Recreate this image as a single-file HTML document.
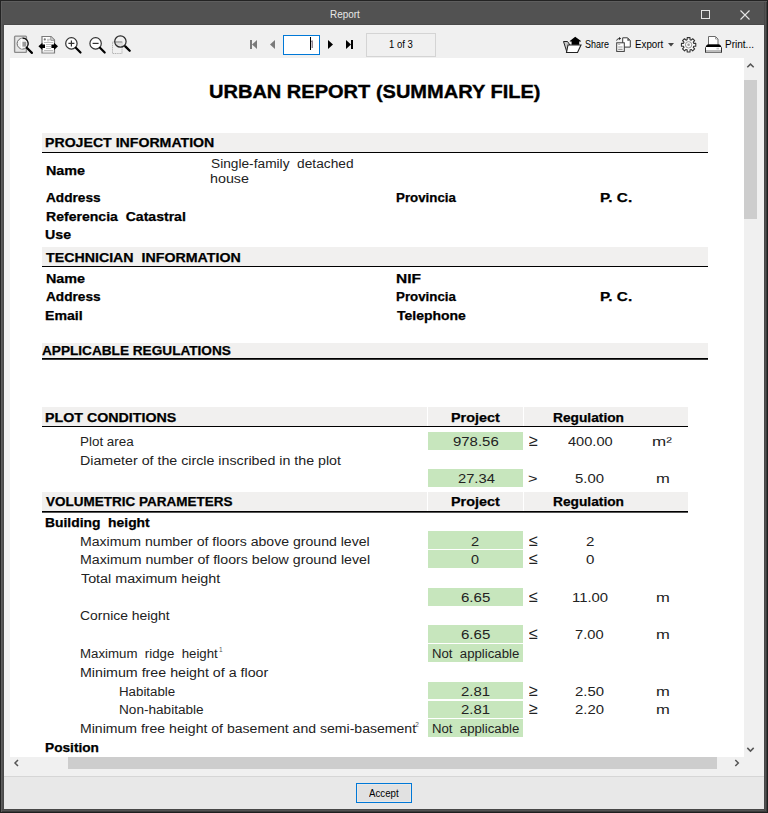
<!DOCTYPE html>
<html><head><meta charset="utf-8"><title>Report</title>
<style>html,body{margin:0;padding:0;width:768px;height:813px;overflow:hidden;background:#232323}body{position:relative;font-family:"Liberation Sans",sans-serif}</style></head><body>
<div style="position:absolute;left:0px;top:0px;width:768px;height:813px;background:#232323;"></div>
<div style="position:absolute;left:1px;top:1px;width:766px;height:811px;background:#5e5e5e;"></div>
<div style="position:absolute;left:2px;top:2px;width:765px;height:810px;background:#3c3c3c;"></div>
<div style="position:absolute;left:2px;top:2px;width:764px;height:809px;background:#525252;"></div>
<div style="position:absolute;left:3px;top:24px;width:761px;height:785px;background:#4a4a4a;"></div>
<div style="position:absolute;left:764px;top:2px;width:1px;height:809px;background:#474747;"></div>
<div style="position:absolute;left:2px;top:809px;width:763px;height:1px;background:#474747;"></div>
<div style="position:absolute;left:766px;top:2px;width:1px;height:810px;background:#3c3c3c;"></div>
<div style="position:absolute;left:2px;top:811px;width:765px;height:1px;background:#3c3c3c;"></div>
<div style="position:absolute;left:767px;top:0px;width:1px;height:813px;background:#1f1f1f;"></div>
<div style="position:absolute;left:0px;top:812px;width:768px;height:1px;background:#1f1f1f;"></div>
<div style="position:absolute;left:4px;top:25px;width:760px;height:752px;background:#f0f0f0;"></div>
<div style="position:absolute;left:4px;top:25px;width:760px;height:1px;background:#f2f2f2;"></div>
<div style="position:absolute;left:4px;top:25px;width:1px;height:752px;background:#f2f2f2;"></div>
<div style="position:absolute;left:763px;top:25px;width:1px;height:752px;background:#f1f1f1;"></div>
<div style="position:absolute;left:4px;top:776px;width:760px;height:1px;background:#d6d6d6;"></div>
<div style="position:absolute;left:4px;top:777px;width:760px;height:32px;background:#e8e8e8;"></div>
<div style="position:absolute;left:10px;top:58px;width:734px;height:699px;background:#ffffff;"></div>
<div style="position:absolute;left:744px;top:80px;width:13px;height:139px;background:#cdcdcd;"></div>
<div style="position:absolute;left:68px;top:757px;width:649px;height:12px;background:#cdcdcd;"></div>
<div style="position:absolute;left:42px;top:133px;width:666px;height:19px;background:#f1f0ef;"></div>
<div style="position:absolute;left:42px;top:152px;width:666px;height:1px;background:#000;"></div>
<div style="position:absolute;left:42px;top:247px;width:666px;height:19px;background:#f1f0ef;"></div>
<div style="position:absolute;left:42px;top:266px;width:666px;height:1px;background:#000;"></div>
<div style="position:absolute;left:42px;top:343px;width:666px;height:15px;background:#f1f0ef;"></div>
<div style="position:absolute;left:42px;top:358px;width:666px;height:1px;background:#000;"></div>
<div style="position:absolute;left:42px;top:359px;width:666px;height:1px;background:#3a3a3a;"></div>
<div style="position:absolute;left:42px;top:407px;width:646px;height:19px;background:#f1f0ef;"></div>
<div style="position:absolute;left:427px;top:407px;width:1px;height:19px;background:#fff;"></div>
<div style="position:absolute;left:523px;top:407px;width:1px;height:19px;background:#fff;"></div>
<div style="position:absolute;left:42px;top:426px;width:646px;height:1px;background:#000;"></div>
<div style="position:absolute;left:42px;top:492px;width:646px;height:19px;background:#f1f0ef;"></div>
<div style="position:absolute;left:427px;top:492px;width:1px;height:19px;background:#fff;"></div>
<div style="position:absolute;left:523px;top:492px;width:1px;height:19px;background:#fff;"></div>
<div style="position:absolute;left:42px;top:511px;width:646px;height:1px;background:#000;"></div>
<div style="position:absolute;left:42px;top:512px;width:646px;height:1px;background:#555;"></div>
<div style="position:absolute;left:428px;top:432px;width:95px;height:18px;background:#c7e6bd;"></div>
<div style="position:absolute;left:428px;top:469px;width:95px;height:18px;background:#c7e6bd;"></div>
<div style="position:absolute;left:428px;top:531px;width:95px;height:18px;background:#c7e6bd;"></div>
<div style="position:absolute;left:428px;top:550px;width:95px;height:18px;background:#c7e6bd;"></div>
<div style="position:absolute;left:428px;top:588px;width:95px;height:18px;background:#c7e6bd;"></div>
<div style="position:absolute;left:428px;top:625px;width:95px;height:18px;background:#c7e6bd;"></div>
<div style="position:absolute;left:428px;top:644px;width:95px;height:18px;background:#c7e6bd;"></div>
<div style="position:absolute;left:428px;top:682px;width:95px;height:17px;background:#c7e6bd;"></div>
<div style="position:absolute;left:428px;top:701px;width:95px;height:17px;background:#c7e6bd;"></div>
<div style="position:absolute;left:428px;top:719px;width:95px;height:18px;background:#c7e6bd;"></div>
<svg style="position:absolute;left:0;top:0" width="768" height="813">
<rect x="701.5" y="10.5" width="8" height="8" fill="none" stroke="#e6e6e6" stroke-width="1"/><rect x="701" y="10" width="9" height="1" fill="#e6e6e6"/><path d="M740.5 10.5 L749.5 19.5 M749.5 10.5 L740.5 19.5" stroke="#e6e6e6" stroke-width="1.1"/><rect x="14.6" y="36.1" width="11.8" height="16.3" rx="0.8" fill="#e6e6e6" stroke="#8c8c8c" stroke-width="1.4"/><circle cx="22.6" cy="43.6" r="5.5" fill="#f0f0f0" stroke="#6a6a6a" stroke-width="1"/><rect x="21" y="38.6" width="1.4" height="10" fill="#fff"/><rect x="22.4" y="41.8" width="3.8" height="4.8" fill="#9a9a9a"/><path d="M22.6 38.1 A5.5 5.5 0 0 1 26.5 47.5" fill="none" stroke="#111" stroke-width="1.1"/><path d="M26.8 47.8 L31.9 52.9" stroke="#000" stroke-width="2.2" stroke-linecap="round"/><path d="M42 36.5 H51 L54.5 40 V53 H42 Z" fill="#fff" stroke="#7a7a7a" stroke-width="1.2"/><path d="M50.8 36.8 V40.3 H54.2" fill="#ddd" stroke="#888" stroke-width="0.9"/><circle cx="44.8" cy="39.4" r="1.1" fill="#777"/><path d="M47 39.3 H50 M47 40.8 H49.5" stroke="#aaa" stroke-width="0.8"/><path d="M44 42.5 H53 M46 44.5 H51 M46 46.5 H51 M46 48.5 H51 M44 50.5 H53" stroke="#b0b0b0" stroke-width="0.8"/><rect x="43" y="51.3" width="10.5" height="1" fill="#ddd"/><path d="M38.4 46.3 L42.4 42.7 V44.6 H45 V48 H42.4 V49.9 Z" fill="#000"/><path d="M58 46.3 L54 42.7 V44.6 H51.4 V48 H54 V49.9 Z" fill="#000"/><circle cx="71.4" cy="43.4" r="5.7" fill="#fff" stroke="#333" stroke-width="1.2"/><path d="M68.4 43.4 H74.4 M71.4 40.4 V46.4" stroke="#333" stroke-width="1.2"/><path d="M75.8 47.8 L80.5 52.5" stroke="#000" stroke-width="2.2" stroke-linecap="round"/><circle cx="95.6" cy="43.4" r="5.7" fill="#fff" stroke="#333" stroke-width="1.2"/><path d="M92.6 43.4 H98.6" stroke="#333" stroke-width="1.2"/><path d="M100 47.8 L104.7 52.5" stroke="#000" stroke-width="2.2" stroke-linecap="round"/><rect x="112.5" y="42" width="9.5" height="11.5" fill="none" stroke="#b4b4b4" stroke-width="1" stroke-dasharray="1.2 0.6"/><rect x="115" y="41.2" width="7.3" height="1.6" fill="#a8a8a8"/><rect x="115" y="43" width="7" height="2.5" fill="#dcdcdc"/><circle cx="120.4" cy="41.5" r="5.7" fill="none" stroke="#2a2a2a" stroke-width="1.2"/><path d="M125.3 46.4 L129.7 50.8" stroke="#000" stroke-width="2.3" stroke-linecap="round"/><rect x="250" y="40" width="2" height="9" fill="#7a7a7a"/><path d="M257 40 V49 L252 44.5 Z" fill="#7a7a7a"/><path d="M275 40 V49 L270 44.5 Z" fill="#7a7a7a"/><rect x="283.5" y="35.5" width="36" height="19" fill="#fff" stroke="#0078d7" stroke-width="1"/><rect x="310" y="37" width="1" height="13" fill="#000"/><path d="M312.2 40.5 V48 M311.3 41.6 L312.4 40.6" stroke="#6a5a6a" stroke-width="1.1" fill="none"/><path d="M328 40 V49 L333 44.5 Z" fill="#000"/><path d="M346 40 V49 L351 44.5 Z" fill="#000"/><rect x="351" y="40" width="2" height="9" fill="#000"/><rect x="366.5" y="33.5" width="69" height="23" fill="#f0f0f0" stroke="#d4d4d4" stroke-width="1"/><path d="M563.5 41.5 L567.5 41.5 L570 45 L567 52.5 Z" fill="#c8c8c8" stroke="#222" stroke-width="1"/><path d="M568 45 H581 L577.5 52.5 H566.5 Z" fill="#fff" stroke="#222" stroke-width="1.1"/><path d="M575.2 36.8 L581 41 V41.6 H579.2 V44.8 H571.6 V41.6 H569.8 V41 Z" fill="#000"/><path d="M622.7 47.1 V37.8 H627.6 L630.3 40.5 V47.1 Z" fill="#fff" stroke="#3a3a3a" stroke-width="1"/><path d="M627.3 37.8 V40.8 H630.3 Z" fill="#555"/><rect x="616.7" y="42.8" width="7.6" height="8.6" fill="#fff" stroke="#3a3a3a" stroke-width="1"/><path d="M618.2 44.3 H620.2 M618.2 47 H622.6 M618.2 49.4 H622.6" stroke="#9a9a9a" stroke-width="1.1"/><path d="M616.6 40.6 Q617 38.6 619.3 38.5" fill="none" stroke="#333" stroke-width="1"/><path d="M619 36.9 L621.2 38.5 L619 40.1 Z" fill="#222"/><path d="M668 43 H674 L671 46.5 Z" fill="#444"/><g transform="translate(688.6 44.8)"><path d="M4.91 -1.99 L5.09 -1.46 L7.17 -1.39 L7.17 1.39 L5.09 1.46 L4.88 2.07 L4.64 2.57 L6.05 4.08 L4.08 6.05 L2.57 4.64 L1.99 4.91 L1.46 5.09 L1.39 7.17 L-1.39 7.17 L-1.46 5.09 L-2.07 4.88 L-2.57 4.64 L-4.08 6.05 L-6.05 4.08 L-4.64 2.57 L-4.91 1.99 L-5.09 1.46 L-7.17 1.39 L-7.17 -1.39 L-5.09 -1.46 L-4.88 -2.07 L-4.64 -2.57 L-6.05 -4.08 L-4.08 -6.05 L-2.57 -4.64 L-1.99 -4.91 L-1.46 -5.09 L-1.39 -7.17 L1.39 -7.17 L1.46 -5.09 L2.07 -4.88 L2.57 -4.64 L4.08 -6.05 L6.05 -4.08 L4.64 -2.57 Z" fill="#fafafa" stroke="#333" stroke-width="1.1" stroke-linejoin="round"/><circle r="3.2" fill="none" stroke="#8a8a8a" stroke-width="0.9"/><circle r="1.3" fill="#9a9a9a"/></g><path d="M708.5 45 V36.5 H715.5 L718 39 V45" fill="#fff" stroke="#6a6a6a" stroke-width="1"/><path d="M715.5 36.5 V39 H718" fill="none" stroke="#8a8a8a" stroke-width="0.8"/><path d="M705.5 52.5 V47.5 L707.5 45 H719.5 L721.5 47.5 V52.5 Z" fill="#fff" stroke="#333" stroke-width="1"/><path d="M706 46.5 L707.8 45 H719.2 L721 46.5 Z" fill="#000" stroke="#000" stroke-width="1"/><rect x="706" y="50" width="15" height="2.5" fill="#bdbdbd"/><rect x="716.5" y="47.8" width="2.5" height="1.6" fill="#c8c8c8"/><path d="M747.3 67.3 L750.5 64.1 L753.7 67.3" fill="none" stroke="#555" stroke-width="1.5"/><path d="M747.3 747.9 L750.5 751.1 L753.7 747.9" fill="none" stroke="#555" stroke-width="1.5"/><path d="M18 760 L15 763 L18 766" fill="none" stroke="#555" stroke-width="1.5"/><path d="M735.3 760 L738.3 763 L735.3 766" fill="none" stroke="#555" stroke-width="1.5"/><rect x="356.5" y="783.5" width="55" height="19" fill="#e1e1e1" stroke="#0078d7" stroke-width="1"/><rect x="357.5" y="784.5" width="53" height="17" fill="none" stroke="#e8e8e8" stroke-width="1"/></svg>
<div id="title" style="position:absolute;left:209.00px;top:82px;white-space:pre;font:bold 18px/20px 'Liberation Sans',sans-serif;color:#000;letter-spacing:0.000px;transform:scale(1.1125,1);transform-origin:0 16px;-webkit-text-stroke:0.35px #000;">URBAN REPORT (SUMMARY FILE)</div>
<div id="pi" style="position:absolute;left:45.00px;top:133px;white-space:pre;font:bold 12.5px/20px 'Liberation Sans',sans-serif;color:#000;letter-spacing:0.000px;transform:scale(1.1304,1);transform-origin:0 14px;-webkit-text-stroke:0.25px #000;">PROJECT INFORMATION</div>
<div id="pi_name" style="position:absolute;left:45.50px;top:161px;white-space:pre;font:bold 12.5px/20px 'Liberation Sans',sans-serif;color:#000;letter-spacing:0.000px;transform:scale(1.1484,1);transform-origin:0 14px;-webkit-text-stroke:0.25px #000;">Name</div>
<div id="pi_sf" style="position:absolute;left:211.00px;top:154px;white-space:pre;font:normal 12.5px/20px 'Liberation Sans',sans-serif;color:#222;letter-spacing:0.000px;transform:scale(1.0971,1);transform-origin:0 14px;">Single-family  detached</div>
<div id="pi_house" style="position:absolute;left:210.10px;top:169px;white-space:pre;font:normal 12.5px/20px 'Liberation Sans',sans-serif;color:#222;letter-spacing:0.000px;transform:scale(1.1426,1);transform-origin:0 14px;">house</div>
<div id="pi_addr" style="position:absolute;left:46.04px;top:188px;white-space:pre;font:bold 12.5px/20px 'Liberation Sans',sans-serif;color:#000;letter-spacing:0.000px;transform:scale(1.0922,1);transform-origin:0 14px;-webkit-text-stroke:0.25px #000;">Address</div>
<div id="pi_prov" style="position:absolute;left:395.88px;top:188px;white-space:pre;font:bold 12.5px/20px 'Liberation Sans',sans-serif;color:#000;letter-spacing:0.000px;transform:scale(1.0649,1);transform-origin:0 14px;-webkit-text-stroke:0.25px #000;">Provincia</div>
<div id="pi_pc" style="position:absolute;left:599.62px;top:188px;white-space:pre;font:bold 12.5px/20px 'Liberation Sans',sans-serif;color:#000;letter-spacing:0.000px;transform:scale(1.2283,1);transform-origin:0 14px;-webkit-text-stroke:0.25px #000;">P. C.</div>
<div id="pi_ref" style="position:absolute;left:45.50px;top:207px;white-space:pre;font:bold 12.5px/20px 'Liberation Sans',sans-serif;color:#000;letter-spacing:0.000px;transform:scale(1.1244,1);transform-origin:0 14px;-webkit-text-stroke:0.25px #000;">Referencia  Catastral</div>
<div id="pi_use" style="position:absolute;left:45.14px;top:225px;white-space:pre;font:bold 12.5px/20px 'Liberation Sans',sans-serif;color:#000;letter-spacing:0.000px;transform:scale(1.1347,1);transform-origin:0 14px;-webkit-text-stroke:0.25px #000;">Use</div>
<div id="ti" style="position:absolute;left:46.44px;top:248px;white-space:pre;font:bold 12.5px/20px 'Liberation Sans',sans-serif;color:#000;letter-spacing:0.000px;transform:scale(1.1367,1);transform-origin:0 14px;-webkit-text-stroke:0.25px #000;">TECHNICIAN  INFORMATION</div>
<div id="ti_name" style="position:absolute;left:45.50px;top:269px;white-space:pre;font:bold 12.5px/20px 'Liberation Sans',sans-serif;color:#000;letter-spacing:0.000px;transform:scale(1.1484,1);transform-origin:0 14px;-webkit-text-stroke:0.25px #000;">Name</div>
<div id="ti_nif" style="position:absolute;left:395.52px;top:269px;white-space:pre;font:bold 12.5px/20px 'Liberation Sans',sans-serif;color:#000;letter-spacing:0.000px;transform:scale(1.2390,1);transform-origin:0 14px;-webkit-text-stroke:0.25px #000;">NIF</div>
<div id="ti_addr" style="position:absolute;left:46.04px;top:287px;white-space:pre;font:bold 12.5px/20px 'Liberation Sans',sans-serif;color:#000;letter-spacing:0.000px;transform:scale(1.0922,1);transform-origin:0 14px;-webkit-text-stroke:0.25px #000;">Address</div>
<div id="ti_prov" style="position:absolute;left:395.88px;top:287px;white-space:pre;font:bold 12.5px/20px 'Liberation Sans',sans-serif;color:#000;letter-spacing:0.000px;transform:scale(1.0649,1);transform-origin:0 14px;-webkit-text-stroke:0.25px #000;">Provincia</div>
<div id="ti_pc" style="position:absolute;left:599.62px;top:287px;white-space:pre;font:bold 12.5px/20px 'Liberation Sans',sans-serif;color:#000;letter-spacing:0.000px;transform:scale(1.2283,1);transform-origin:0 14px;-webkit-text-stroke:0.25px #000;">P. C.</div>
<div id="ti_email" style="position:absolute;left:45.14px;top:306px;white-space:pre;font:bold 12.5px/20px 'Liberation Sans',sans-serif;color:#000;letter-spacing:0.000px;transform:scale(1.1290,1);transform-origin:0 14px;-webkit-text-stroke:0.25px #000;">Email</div>
<div id="ti_tel" style="position:absolute;left:396.78px;top:306px;white-space:pre;font:bold 12.5px/20px 'Liberation Sans',sans-serif;color:#000;letter-spacing:0.000px;transform:scale(1.1187,1);transform-origin:0 14px;-webkit-text-stroke:0.25px #000;">Telephone</div>
<div id="ar" style="position:absolute;left:42.14px;top:341px;white-space:pre;font:bold 12.5px/20px 'Liberation Sans',sans-serif;color:#000;letter-spacing:0.000px;transform:scale(1.0894,1);transform-origin:0 14px;-webkit-text-stroke:0.25px #000;">APPLICABLE REGULATIONS</div>
<div id="pc" style="position:absolute;left:45.00px;top:408px;white-space:pre;font:bold 12.5px/20px 'Liberation Sans',sans-serif;color:#000;letter-spacing:0.000px;transform:scale(1.1387,1);transform-origin:0 14px;-webkit-text-stroke:0.25px #000;">PLOT CONDITIONS</div>
<div id="pc_proj" style="position:absolute;left:450.62px;top:408px;white-space:pre;font:bold 12.5px/20px 'Liberation Sans',sans-serif;color:#000;letter-spacing:0.000px;transform:scale(1.1489,1);transform-origin:0 14px;-webkit-text-stroke:0.25px #000;">Project</div>
<div id="pc_reg" style="position:absolute;left:552.76px;top:408px;white-space:pre;font:bold 12.5px/20px 'Liberation Sans',sans-serif;color:#000;letter-spacing:0.000px;transform:scale(1.0996,1);transform-origin:0 14px;-webkit-text-stroke:0.25px #000;">Regulation</div>
<div id="pc_area" style="position:absolute;left:80.00px;top:432px;white-space:pre;font:normal 12.5px/20px 'Liberation Sans',sans-serif;color:#222;letter-spacing:0.000px;transform:scale(1.0743,1);transform-origin:0 14px;">Plot area</div>
<div id="pc_area_v" style="position:absolute;left:452.62px;top:432px;white-space:pre;font:normal 12.5px/20px 'Liberation Sans',sans-serif;color:#222;letter-spacing:0.000px;transform:scale(1.1957,1);transform-origin:0 14px;">978.56</div>
<div id="pc_area_op" style="position:absolute;left:528.90px;top:432px;white-space:pre;font:normal 12.5px/20px 'Liberation Sans',sans-serif;color:#222;letter-spacing:0.000px;transform:scale(1.3000,1.3);transform-origin:0 14px;">≥</div>
<div id="pc_area_r" style="position:absolute;left:567.90px;top:432px;white-space:pre;font:normal 12.5px/20px 'Liberation Sans',sans-serif;color:#222;letter-spacing:0.000px;transform:scale(1.1675,1);transform-origin:0 14px;">400.00</div>
<div id="pc_area_u" style="position:absolute;left:652.24px;top:432px;white-space:pre;font:normal 12.5px/20px 'Liberation Sans',sans-serif;color:#222;letter-spacing:0.000px;transform:scale(1.3577,1);transform-origin:0 14px;">m²</div>
<div id="pc_diam" style="position:absolute;left:80.00px;top:451px;white-space:pre;font:normal 12.5px/20px 'Liberation Sans',sans-serif;color:#222;letter-spacing:0.000px;transform:scale(1.1382,1);transform-origin:0 14px;">Diameter of the circle inscribed in the plot</div>
<div id="pc_diam_v" style="position:absolute;left:457.80px;top:469px;white-space:pre;font:normal 12.5px/20px 'Liberation Sans',sans-serif;color:#222;letter-spacing:0.000px;transform:scale(1.1774,1);transform-origin:0 14px;">27.34</div>
<div id="pc_diam_op" style="position:absolute;left:528.00px;top:469px;white-space:pre;font:normal 12.5px/20px 'Liberation Sans',sans-serif;color:#222;letter-spacing:0.000px;transform:scale(1.3000,1);transform-origin:0 14px;">&gt;</div>
<div id="pc_diam_r" style="position:absolute;left:575.00px;top:469px;white-space:pre;font:normal 12.5px/20px 'Liberation Sans',sans-serif;color:#222;letter-spacing:0.000px;transform:scale(1.1909,1);transform-origin:0 14px;">5.00</div>
<div id="pc_diam_u" style="position:absolute;left:656.00px;top:469px;white-space:pre;font:normal 12.5px/20px 'Liberation Sans',sans-serif;color:#222;letter-spacing:0.000px;transform:scale(1.3257,1);transform-origin:0 14px;">m</div>
<div id="vp" style="position:absolute;left:45.90px;top:492px;white-space:pre;font:bold 12.5px/20px 'Liberation Sans',sans-serif;color:#000;letter-spacing:0.000px;transform:scale(1.0804,1);transform-origin:0 14px;-webkit-text-stroke:0.25px #000;">VOLUMETRIC PARAMETERS</div>
<div id="vp_proj" style="position:absolute;left:450.62px;top:492px;white-space:pre;font:bold 12.5px/20px 'Liberation Sans',sans-serif;color:#000;letter-spacing:0.000px;transform:scale(1.1489,1);transform-origin:0 14px;-webkit-text-stroke:0.25px #000;">Project</div>
<div id="vp_reg" style="position:absolute;left:552.76px;top:492px;white-space:pre;font:bold 12.5px/20px 'Liberation Sans',sans-serif;color:#000;letter-spacing:0.000px;transform:scale(1.0996,1);transform-origin:0 14px;-webkit-text-stroke:0.25px #000;">Regulation</div>
<div id="vp_bh" style="position:absolute;left:45.00px;top:513px;white-space:pre;font:bold 12.5px/20px 'Liberation Sans',sans-serif;color:#000;letter-spacing:0.000px;transform:scale(1.1085,1);transform-origin:0 14px;-webkit-text-stroke:0.25px #000;">Building  height</div>
<div id="vp_fa" style="position:absolute;left:79.76px;top:532px;white-space:pre;font:normal 12.5px/20px 'Liberation Sans',sans-serif;color:#222;letter-spacing:0.000px;transform:scale(1.1270,1);transform-origin:0 14px;">Maximum number of floors above ground level</div>
<div id="vp_fb" style="position:absolute;left:79.76px;top:550px;white-space:pre;font:normal 12.5px/20px 'Liberation Sans',sans-serif;color:#222;letter-spacing:0.000px;transform:scale(1.1345,1);transform-origin:0 14px;">Maximum number of floors below ground level</div>
<div id="vp_tmh" style="position:absolute;left:80.66px;top:569px;white-space:pre;font:normal 12.5px/20px 'Liberation Sans',sans-serif;color:#222;letter-spacing:0.000px;transform:scale(1.1451,1);transform-origin:0 14px;">Total maximum height</div>
<div id="vp_ch" style="position:absolute;left:79.76px;top:606px;white-space:pre;font:normal 12.5px/20px 'Liberation Sans',sans-serif;color:#222;letter-spacing:0.000px;transform:scale(1.1129,1);transform-origin:0 14px;">Cornice height</div>
<div id="vp_mrh" style="position:absolute;left:79.76px;top:644px;white-space:pre;font:normal 12.5px/20px 'Liberation Sans',sans-serif;color:#222;letter-spacing:0.000px;transform:scale(1.0606,1);transform-origin:0 14px;">Maximum  ridge  height</div>
<div id="vp_mfh" style="position:absolute;left:79.76px;top:663px;white-space:pre;font:normal 12.5px/20px 'Liberation Sans',sans-serif;color:#222;letter-spacing:0.000px;transform:scale(1.1383,1);transform-origin:0 14px;">Minimum free height of a floor</div>
<div id="vp_hab" style="position:absolute;left:118.50px;top:682px;white-space:pre;font:normal 12.5px/20px 'Liberation Sans',sans-serif;color:#222;letter-spacing:0.000px;transform:scale(1.0642,1);transform-origin:0 14px;">Habitable</div>
<div id="vp_nonhab" style="position:absolute;left:118.50px;top:700px;white-space:pre;font:normal 12.5px/20px 'Liberation Sans',sans-serif;color:#222;letter-spacing:0.000px;transform:scale(1.0879,1);transform-origin:0 14px;">Non-habitable</div>
<div id="vp_base" style="position:absolute;left:79.76px;top:719px;white-space:pre;font:normal 12.5px/20px 'Liberation Sans',sans-serif;color:#222;letter-spacing:0.000px;transform:scale(1.1249,1);transform-origin:0 14px;">Minimum free height of basement and semi-basement</div>
<div id="vp_pos" style="position:absolute;left:45.00px;top:738px;white-space:pre;font:bold 12.5px/20px 'Liberation Sans',sans-serif;color:#000;letter-spacing:0.000px;transform:scale(1.0945,1);transform-origin:0 14px;-webkit-text-stroke:0.25px #000;">Position</div>
<div id="v_fa" style="position:absolute;left:471.12px;top:532px;white-space:pre;font:normal 12.5px/20px 'Liberation Sans',sans-serif;color:#222;letter-spacing:0.000px;transform:scale(1.1737,1);transform-origin:0 14px;">2</div>
<div id="v_fa_op" style="position:absolute;left:528.90px;top:532px;white-space:pre;font:normal 12.5px/20px 'Liberation Sans',sans-serif;color:#222;letter-spacing:0.000px;transform:scale(1.3000,1.3);transform-origin:0 14px;">≤</div>
<div id="v_fa_r" style="position:absolute;left:585.62px;top:532px;white-space:pre;font:normal 12.5px/20px 'Liberation Sans',sans-serif;color:#222;letter-spacing:0.000px;transform:scale(1.2070,1);transform-origin:0 14px;">2</div>
<div id="v_fb" style="position:absolute;left:471.12px;top:550px;white-space:pre;font:normal 12.5px/20px 'Liberation Sans',sans-serif;color:#222;letter-spacing:0.000px;transform:scale(1.1500,1);transform-origin:0 14px;">0</div>
<div id="v_fb_op" style="position:absolute;left:528.90px;top:550px;white-space:pre;font:normal 12.5px/20px 'Liberation Sans',sans-serif;color:#222;letter-spacing:0.000px;transform:scale(1.3000,1.3);transform-origin:0 14px;">≤</div>
<div id="v_fb_r" style="position:absolute;left:585.62px;top:550px;white-space:pre;font:normal 12.5px/20px 'Liberation Sans',sans-serif;color:#222;letter-spacing:0.000px;transform:scale(1.2070,1);transform-origin:0 14px;">0</div>
<div id="v_tmh" style="position:absolute;left:461.12px;top:588px;white-space:pre;font:normal 12.5px/20px 'Liberation Sans',sans-serif;color:#222;letter-spacing:0.000px;transform:scale(1.2047,1);transform-origin:0 14px;">6.65</div>
<div id="v_tmh_op" style="position:absolute;left:528.90px;top:588px;white-space:pre;font:normal 12.5px/20px 'Liberation Sans',sans-serif;color:#222;letter-spacing:0.000px;transform:scale(1.3000,1.3);transform-origin:0 14px;">≤</div>
<div id="v_tmh_r" style="position:absolute;left:571.88px;top:588px;white-space:pre;font:normal 12.5px/20px 'Liberation Sans',sans-serif;color:#222;letter-spacing:0.000px;transform:scale(1.1882,1);transform-origin:0 14px;">11.00</div>
<div id="v_tmh_u" style="position:absolute;left:656.00px;top:588px;white-space:pre;font:normal 12.5px/20px 'Liberation Sans',sans-serif;color:#222;letter-spacing:0.000px;transform:scale(1.3257,1);transform-origin:0 14px;">m</div>
<div id="v_ch" style="position:absolute;left:461.12px;top:625px;white-space:pre;font:normal 12.5px/20px 'Liberation Sans',sans-serif;color:#222;letter-spacing:0.000px;transform:scale(1.2047,1);transform-origin:0 14px;">6.65</div>
<div id="v_ch_op" style="position:absolute;left:528.90px;top:625px;white-space:pre;font:normal 12.5px/20px 'Liberation Sans',sans-serif;color:#222;letter-spacing:0.000px;transform:scale(1.3000,1.3);transform-origin:0 14px;">≤</div>
<div id="v_ch_r" style="position:absolute;left:574.62px;top:625px;white-space:pre;font:normal 12.5px/20px 'Liberation Sans',sans-serif;color:#222;letter-spacing:0.000px;transform:scale(1.1740,1);transform-origin:0 14px;">7.00</div>
<div id="v_ch_u" style="position:absolute;left:656.00px;top:625px;white-space:pre;font:normal 12.5px/20px 'Liberation Sans',sans-serif;color:#222;letter-spacing:0.000px;transform:scale(1.3257,1);transform-origin:0 14px;">m</div>
<div id="v_mrh" style="position:absolute;left:431.76px;top:644px;white-space:pre;font:normal 12.5px/20px 'Liberation Sans',sans-serif;color:#222;letter-spacing:0.000px;transform:scale(1.0550,1);transform-origin:0 14px;">Not  applicable</div>
<div id="v_hab" style="position:absolute;left:461.12px;top:682px;white-space:pre;font:normal 12.5px/20px 'Liberation Sans',sans-serif;color:#222;letter-spacing:0.000px;transform:scale(1.1926,1);transform-origin:0 14px;">2.81</div>
<div id="v_hab_op" style="position:absolute;left:528.90px;top:682px;white-space:pre;font:normal 12.5px/20px 'Liberation Sans',sans-serif;color:#222;letter-spacing:0.000px;transform:scale(1.3000,1.3);transform-origin:0 14px;">≥</div>
<div id="v_hab_r" style="position:absolute;left:575.00px;top:682px;white-space:pre;font:normal 12.5px/20px 'Liberation Sans',sans-serif;color:#222;letter-spacing:0.000px;transform:scale(1.1909,1);transform-origin:0 14px;">2.50</div>
<div id="v_hab_u" style="position:absolute;left:656.00px;top:682px;white-space:pre;font:normal 12.5px/20px 'Liberation Sans',sans-serif;color:#222;letter-spacing:0.000px;transform:scale(1.3257,1);transform-origin:0 14px;">m</div>
<div id="v_nh" style="position:absolute;left:461.12px;top:700px;white-space:pre;font:normal 12.5px/20px 'Liberation Sans',sans-serif;color:#222;letter-spacing:0.000px;transform:scale(1.1926,1);transform-origin:0 14px;">2.81</div>
<div id="v_nh_op" style="position:absolute;left:528.90px;top:700px;white-space:pre;font:normal 12.5px/20px 'Liberation Sans',sans-serif;color:#222;letter-spacing:0.000px;transform:scale(1.3000,1.3);transform-origin:0 14px;">≥</div>
<div id="v_nh_r" style="position:absolute;left:575.00px;top:700px;white-space:pre;font:normal 12.5px/20px 'Liberation Sans',sans-serif;color:#222;letter-spacing:0.000px;transform:scale(1.1909,1);transform-origin:0 14px;">2.20</div>
<div id="v_nh_u" style="position:absolute;left:656.00px;top:700px;white-space:pre;font:normal 12.5px/20px 'Liberation Sans',sans-serif;color:#222;letter-spacing:0.000px;transform:scale(1.3257,1);transform-origin:0 14px;">m</div>
<div id="v_base" style="position:absolute;left:431.76px;top:719px;white-space:pre;font:normal 12.5px/20px 'Liberation Sans',sans-serif;color:#222;letter-spacing:0.000px;transform:scale(1.0550,1);transform-origin:0 14px;">Not  applicable</div>
<div id="t_report" style="position:absolute;left:329.50px;top:4px;white-space:pre;font:normal 10.5px/20px 'Liberation Sans',sans-serif;color:#e8e8e8;letter-spacing:0.000px;transform:scale(0.9419,1);transform-origin:0 14px;">Report</div>
<div id="t_share" style="position:absolute;left:584.50px;top:35px;white-space:pre;font:normal 10px/20px 'Liberation Sans',sans-serif;color:#000;letter-spacing:0.000px;transform:scale(0.8962,1);transform-origin:0 13px;">Share</div>
<div id="t_export" style="position:absolute;left:635.24px;top:35px;white-space:pre;font:normal 10px/20px 'Liberation Sans',sans-serif;color:#000;letter-spacing:0.000px;transform:scale(0.9769,1);transform-origin:0 13px;">Export</div>
<div id="t_print" style="position:absolute;left:725.24px;top:35px;white-space:pre;font:normal 10px/20px 'Liberation Sans',sans-serif;color:#000;letter-spacing:0.000px;transform:scale(1.0030,1);transform-origin:0 13px;">Print...</div>
<div id="t_pages" style="position:absolute;left:388.50px;top:35px;white-space:pre;font:normal 10px/20px 'Liberation Sans',sans-serif;color:#000;letter-spacing:0.000px;transform:scale(0.9507,1);transform-origin:0 13px;">1 of 3</div>
<div id="t_accept" style="position:absolute;left:368.90px;top:783px;white-space:pre;font:normal 11px/20px 'Liberation Sans',sans-serif;color:#000;letter-spacing:0.000px;transform:scale(0.8808,1);transform-origin:0 14px;">Accept</div>
<div style="position:absolute;left:219px;top:646px;font:normal 6.5px/8px 'Liberation Sans',sans-serif;color:#555">1</div>
<div style="position:absolute;left:415.3px;top:721px;font:normal 6.5px/8px 'Liberation Sans',sans-serif;color:#555">2</div>
</body></html>
